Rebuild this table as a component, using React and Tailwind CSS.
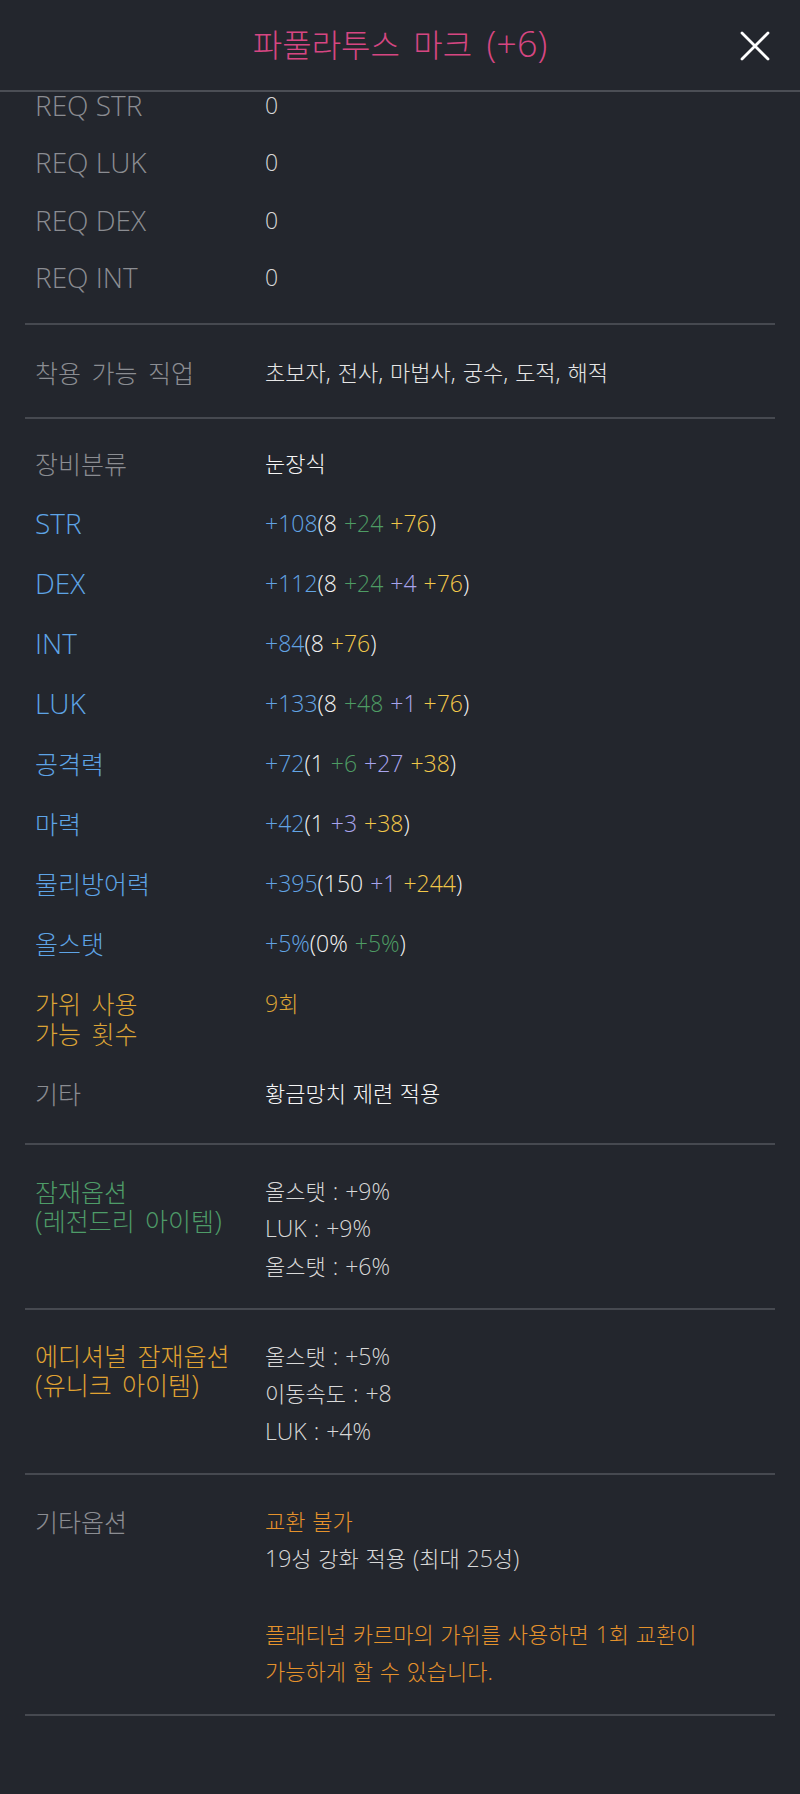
import React from "react";

const KV = ({ children }) => <span className="text-[22px] leading-none">{children}</span>;
const KL = ({ children }) => <span className="text-[25px] leading-none [word-spacing:4px]">{children}</span>;

const B = ({ children }) => <span className="text-[#62a4e4]">{children}</span>;
const W = ({ children }) => <span className="text-[#f2f2f2]">{children}</span>;
const G = ({ children }) => <span className="text-[#4e9c64]">{children}</span>;
const P = ({ children }) => <span className="text-[#a9a5ee]">{children}</span>;
const Y = ({ children }) => <span className="text-[#f2c84a]">{children}</span>;

function Row({ h = "h-[60px] items-center", lead = "leading-[30px]", label, labelColor, children, valueColor = "text-[#f2f2f2]" }) {
  return (
    <div className={"flex " + h}>
      <div className={"w-[240px] shrink-0 pl-[10px] text-[28px] " + lead + " " + labelColor}>{label}</div>
      <div className={"text-[23px] [word-spacing:1px] " + lead + " " + valueColor}>{children}</div>
    </div>
  );
}

const grey = "text-[#8b8d92]";
const blue = "text-[#5ea4e6]";

export default function App() {
  return (
    <div className="w-[800px] h-[1794px] bg-[#23262d] overflow-hidden flex flex-col font-['Open_Sans','Noto_Sans_CJK_KR',sans-serif] font-light">
      <header className="relative h-[92px] shrink-0 border-b-2 border-[#4b4e55] flex items-center justify-center">
        <h1 className="text-[36px] leading-[40px] text-[#d64682] mt-[-2px] [word-spacing:5px]">
          <span className="text-[32px] leading-none">파풀라투스 마크</span> (+6)
        </h1>
        <button className="absolute right-[30px] top-[31px] w-[30px] h-[30px]" aria-label="close">
          <svg width="30" height="30" viewBox="0 0 30 30">
            <path d="M2 2 L28 28 M28 2 L2 28" stroke="#ffffff" strokeWidth="2.8" strokeLinecap="round" fill="none" />
          </svg>
        </button>
      </header>

      <div className="flex-1 px-[25px]">
        {/* REQ section */}
        <section className="pb-[17.6px] border-b-2 border-[#464950]">
          <Row h="h-[41.8px] items-start" lead="leading-[26.3px]" label="REQ STR" labelColor={grey} valueColor="text-[#d8d8d8]">0</Row>
          <Row h="h-[57.3px] items-center" label="REQ LUK" labelColor={grey} valueColor="text-[#d8d8d8]">0</Row>
          <Row h="h-[57.3px] items-center" label="REQ DEX" labelColor={grey} valueColor="text-[#d8d8d8]">0</Row>
          <Row h="h-[57.3px] items-center" label="REQ INT" labelColor={grey} valueColor="text-[#d8d8d8]">0</Row>
        </section>

        {/* Job section */}
        <section className="pt-[17.7px] pb-[16.4px] border-b-2 border-[#464950]">
          <Row h="h-[57.3px] items-center" label={<KL>착용 가능 직업</KL>} labelColor={grey} valueColor="text-[#e6e6e6]">
            <KV>초보자</KV>, <KV>전사</KV>, <KV>마법사</KV>, <KV>궁수</KV>, <KV>도적</KV>, <KV>해적</KV>
          </Row>
        </section>

        {/* Stats section */}
        <section className="pt-[14.6px] pb-[19.7px] border-b-2 border-[#464950]">
          <Row label={<KL>장비분류</KL>} labelColor={grey} valueColor="text-[#f6f6f6]">
            <KV>눈장식</KV>
          </Row>
          <Row label="STR" labelColor={blue}>
            <B>+108</B><W>(8 </W><G>+24</G> <Y>+76</Y><W>)</W>
          </Row>
          <Row label="DEX" labelColor={blue}>
            <B>+112</B><W>(8 </W><G>+24</G> <P>+4</P> <Y>+76</Y><W>)</W>
          </Row>
          <Row label="INT" labelColor={blue}>
            <B>+84</B><W>(8 </W><Y>+76</Y><W>)</W>
          </Row>
          <Row label="LUK" labelColor={blue}>
            <B>+133</B><W>(8 </W><G>+48</G> <P>+1</P> <Y>+76</Y><W>)</W>
          </Row>
          <Row label={<KL>공격력</KL>} labelColor={blue}>
            <B>+72</B><W>(1 </W><G>+6</G> <P>+27</P> <Y>+38</Y><W>)</W>
          </Row>
          <Row label={<KL>마력</KL>} labelColor={blue}>
            <B>+42</B><W>(1 </W><P>+3</P> <Y>+38</Y><W>)</W>
          </Row>
          <Row label={<KL>물리방어력</KL>} labelColor={blue}>
            <B>+395</B><W>(150 </W><P>+1</P> <Y>+244</Y><W>)</W>
          </Row>
          <Row label={<KL>올스탯</KL>} labelColor={blue}>
            <B>+5%</B><W>(0% </W><G>+5%</G><W>)</W>
          </Row>
          <div className="flex items-start py-[15px]">
            <div className="w-[240px] shrink-0 pl-[10px] text-[28px] leading-[30px] text-[#dca336]">
              <div><KL>가위 사용</KL></div>
              <div><KL>가능 횟수</KL></div>
            </div>
            <div className="text-[23px] leading-[30px] text-[#dca336]">
              9<KV>회</KV>
            </div>
          </div>
          <Row label={<KL>기타</KL>} labelColor={grey} valueColor="text-[#f6f6f6]">
            <KV>황금망치 제련 적용</KV>
          </Row>
        </section>

        {/* Potential */}
        <section className="pt-[27.7px] pb-[22.2px] border-b-2 border-[#464950] flex items-start">
          <div className="w-[240px] shrink-0 pl-[10px] pt-[4.5px] text-[28px] leading-[28.5px] text-[#4e9c68]">
            <div><KL>잠재옵션</KL></div>
            <div>(<KL>레전드리 아이템</KL>)</div>
          </div>
          <div className="text-[23px] leading-[37.6px] [word-spacing:1px] text-[#d8d8d8]">
            <div><KV>올스탯</KV> : +9%</div>
            <div>LUK : +9%</div>
            <div><KV>올스탯</KV> : +6%</div>
          </div>
        </section>

        {/* Additional potential */}
        <section className="pt-[28.2px] pb-[22.3px] border-b-2 border-[#464950] flex items-start">
          <div className="w-[240px] shrink-0 pl-[10px] pt-[3.6px] text-[28px] leading-[29px] text-[#e0a332]">
            <div className="whitespace-nowrap"><KL>에디셔널 잠재옵션</KL></div>
            <div>(<KL>유니크 아이템</KL>)</div>
          </div>
          <div className="text-[23px] leading-[37.6px] [word-spacing:1px] text-[#d8d8d8]">
            <div><KV>올스탯</KV> : +5%</div>
            <div><KV>이동속도</KV> : +8</div>
            <div>LUK : +4%</div>
          </div>
        </section>

        {/* Etc options */}
        <section className="pt-[27.9px] pb-[23px] border-b-2 border-[#464950] flex items-start">
          <div className="w-[240px] shrink-0 pl-[10px] text-[28px] leading-[37.6px] text-[#8b8d92]">
            <KL>기타옵션</KL>
          </div>
          <div className="text-[23px] leading-[37.6px] [word-spacing:1px] text-[#d8d8d8]">
            <div className="text-[#e5922c]"><KV>교환 불가</KV></div>
            <div>19<KV>성 강화 적용</KV> (<KV>최대</KV> 25<KV>성</KV>)</div>
            <div>&nbsp;</div>
            <div className="text-[#e5922c]">
              <div className="whitespace-nowrap"><KV>플래티넘 카르마의 가위를 사용하면</KV> 1<KV>회 교환이</KV></div>
              <div><KV>가능하게 할 수 있습니다</KV>.</div>
            </div>
          </div>
        </section>
      </div>
    </div>
  );
}
